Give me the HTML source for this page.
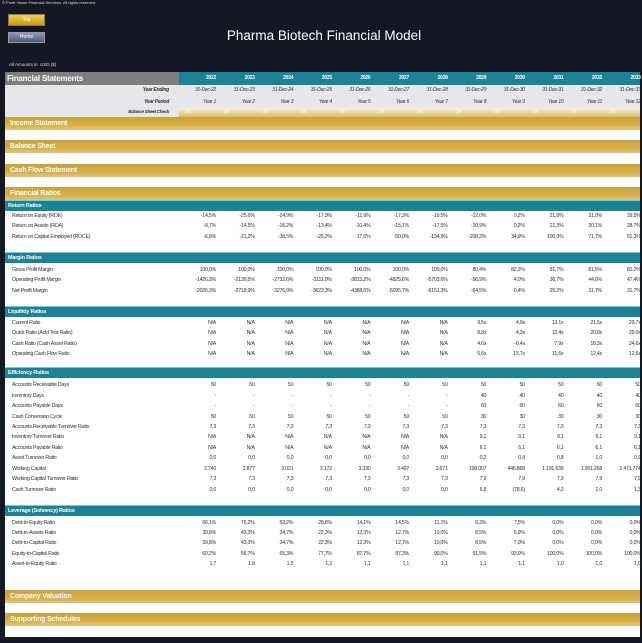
<!DOCTYPE html>
<html><head><meta charset="utf-8">
<style>
*{margin:0;padding:0;box-sizing:border-box}
body{width:642px;height:643px;background:#141822;position:relative;overflow:hidden;font-family:"Liberation Sans",sans-serif;font-size:5.3px;color:#333}
.a{position:absolute}
.sheet{position:absolute;left:5px;top:72px;width:635px;height:565px;background:#fff}
.gold{position:absolute;left:5px;width:635px;height:13px;background:linear-gradient(#c9a23a,#d8ae45 60%,#e3c47a);color:#fff;font-weight:bold;font-size:7px;line-height:13px;padding-left:5px;letter-spacing:-0.2px}
.teal{position:absolute;left:5px;width:635px;height:11px;background:#1d8296;color:#fff;font-weight:bold;font-size:5.5px;line-height:11px;padding-left:3px;border-top:1px solid #7cc;letter-spacing:-0.2px}
.r{position:absolute;left:0;width:642px;height:10px;line-height:10px;letter-spacing:-0.25px}
.r .l{position:absolute;left:12px}
.v{position:absolute;left:179px;top:0;display:flex}
.v span{width:38.6px;text-align:right;padding-right:1.5px;display:block;white-space:nowrap}
</style></head><body>
<div class="a" style="left:2px;top:0;color:#ddd;font-size:4px">© Profit Vision Financial Services. All rights reserved.</div>
<div class="a" style="left:8px;top:14px;width:37px;height:12px;background:linear-gradient(#f0d050,#c89a10);border:1px solid #876;color:#fff;font-size:5px;text-align:center;line-height:10px">Top</div>
<div class="a" style="left:8px;top:32px;width:37px;height:11px;background:linear-gradient(#8a9ab8,#4a5a78);border:1px solid #999;color:#fff;font-size:5px;text-align:center;line-height:9px">Home</div>
<div class="a" style="left:0;width:642px;top:28px;text-align:center;color:#fff;font-size:13.5px;padding-left:6px">Pharma Biotech Financial Model</div>
<div class="a" style="left:9px;top:62px;color:#ddd;font-size:4.5px">All Amounts in &nbsp;USD ($)</div>
<div class="sheet"></div>
<div class="a" style="left:5px;top:72px;width:174px;height:13px;background:#7e7e7e;color:#fff;font-weight:bold;font-size:8px;line-height:13px;padding-left:2px;letter-spacing:-0.2px">Financial Statements</div>
<div class="a" style="left:179px;top:72px;width:461px;height:13px;background:#1d8296"></div>
<div class="r" style="top:73px;color:#fff;font-weight:bold;font-size:5px"><div class="v"><span>2022</span><span>2023</span><span>2024</span><span>2025</span><span>2026</span><span>2027</span><span>2028</span><span>2029</span><span>2030</span><span>2031</span><span>2032</span><span>2033</span></div></div>
<div class="a" style="left:5px;top:85px;width:635px;height:32px;background:#e6e7ea"></div>
<div class="a" style="left:179px;top:108px;width:461px;height:9px;background:linear-gradient(#f6f0dc,#dcbb6a)"></div>
<div class="r" style="top:85px;font-style:italic;font-size:5px"><div class="a" style="right:473px;font-weight:bold">Year Ending</div><div class="v"><span>31-Dec-22</span><span>31-Dec-23</span><span>31-Dec-24</span><span>31-Dec-25</span><span>31-Dec-26</span><span>31-Dec-27</span><span>31-Dec-28</span><span>31-Dec-29</span><span>31-Dec-30</span><span>31-Dec-31</span><span>31-Dec-32</span><span>31-Dec-33</span></div></div>
<div class="r" style="top:97px;font-style:italic;font-size:5px"><div class="a" style="right:473px;font-weight:bold">Year Period</div><div class="v"><span>Year 1</span><span>Year 2</span><span>Year 3</span><span>Year 4</span><span>Year 5</span><span>Year 6</span><span>Year 7</span><span>Year 8</span><span>Year 9</span><span>Year 10</span><span>Year 11</span><span>Year 12</span></div></div>
<div class="r" style="top:107px;font-style:italic;font-size:4.5px"><div class="a" style="right:473px;font-weight:bold">Balance Sheet Check</div><div class="v" style="color:#fff"><span style="text-align:left;padding-left:6px">OK</span><span style="text-align:left;padding-left:6px">OK</span><span style="text-align:left;padding-left:6px">OK</span><span style="text-align:left;padding-left:6px">OK</span><span style="text-align:left;padding-left:6px">OK</span><span style="text-align:left;padding-left:6px">OK</span><span style="text-align:left;padding-left:6px">OK</span><span style="text-align:left;padding-left:6px">OK</span><span style="text-align:left;padding-left:6px">OK</span><span style="text-align:left;padding-left:6px">OK</span><span style="text-align:left;padding-left:6px">OK</span><span style="text-align:left;padding-left:6px">OK</span></div></div>

<div class="gold" style="top:117px">Income Statement</div>
<div class="gold" style="top:140px">Balance Sheet</div>
<div class="gold" style="top:164px">Cash Flow Statement</div>
<div class="gold" style="top:187px">Financial Ratios</div>

<div class="teal" style="top:200px">Return Ratios</div>
<div class="r" style="top:211px"><div class="l">Return on Equity (ROE)</div><div class="v"><span>-14,5%</span><span>-25,6%</span><span>-24,9%</span><span>-17,3%</span><span>-11,9%</span><span>-17,3%</span><span>-19,5%</span><span>-12,0%</span><span>0,2%</span><span>21,8%</span><span>31,0%</span><span>29,5%</span></div></div>
<div class="r" style="top:221px"><div class="l">Return on Assets (ROA)</div><div class="v"><span>-8,7%</span><span>-14,5%</span><span>-16,2%</span><span>-13,4%</span><span>-10,4%</span><span>-15,1%</span><span>-17,5%</span><span>-10,9%</span><span>0,2%</span><span>21,3%</span><span>30,1%</span><span>28,7%</span></div></div>
<div class="r" style="top:232px"><div class="l">Return on Capital Employed (ROCE)</div><div class="v"><span>-6,8%</span><span>-21,2%</span><span>-38,5%</span><span>-26,2%</span><span>-17,6%</span><span>-50,0%</span><span>-134,9%</span><span>-208,2%</span><span>34,9%</span><span>100,9%</span><span>71,7%</span><span>51,3%</span></div></div>

<div class="teal" style="top:252px">Margin Ratios</div>
<div class="r" style="top:265px"><div class="l">Gross Profit Margin</div><div class="v"><span>100,0%</span><span>100,0%</span><span>100,0%</span><span>100,0%</span><span>100,0%</span><span>100,0%</span><span>100,0%</span><span>80,4%</span><span>82,3%</span><span>81,7%</span><span>81,5%</span><span>81,2%</span></div></div>
<div class="r" style="top:275px"><div class="l">Operating Profit Margin</div><div class="v"><span>-1426,3%</span><span>-2139,5%</span><span>-2732,6%</span><span>-3111,0%</span><span>-3815,2%</span><span>-4825,6%</span><span>-5703,6%</span><span>-56,9%</span><span>4,0%</span><span>36,7%</span><span>44,6%</span><span>47,4%</span></div></div>
<div class="r" style="top:286px"><div class="l">Net Profit Margin</div><div class="v"><span>-2026,3%</span><span>-2718,9%</span><span>-3276,9%</span><span>-3623,3%</span><span>-4388,6%</span><span>-5095,7%</span><span>-6151,3%</span><span>-64,5%</span><span>0,4%</span><span>25,2%</span><span>31,7%</span><span>31,7%</span></div></div>

<div class="teal" style="top:306px">Liquitidy Ratios</div>
<div class="r" style="top:318px"><div class="l">Current Ratio</div><div class="v"><span>N/A</span><span>N/A</span><span>N/A</span><span>N/A</span><span>N/A</span><span>N/A</span><span>N/A</span><span>9,5x</span><span>4,9x</span><span>13,1x</span><span>21,5x</span><span>29,7x</span></div></div>
<div class="r" style="top:328px"><div class="l">Quick Ratio (Acid Test Ratio)</div><div class="v"><span>N/A</span><span>N/A</span><span>N/A</span><span>N/A</span><span>N/A</span><span>N/A</span><span>N/A</span><span>8,8x</span><span>4,3x</span><span>12,4x</span><span>20,8x</span><span>29,0x</span></div></div>
<div class="r" style="top:339px"><div class="l">Cash Ratio (Cash Asset Ratio)</div><div class="v"><span>N/A</span><span>N/A</span><span>N/A</span><span>N/A</span><span>N/A</span><span>N/A</span><span>N/A</span><span>4,6x</span><span>-0,4x</span><span>7,9x</span><span>16,3x</span><span>24,6x</span></div></div>
<div class="r" style="top:349px"><div class="l">Operating Cash Flow Ratio</div><div class="v"><span>N/A</span><span>N/A</span><span>N/A</span><span>N/A</span><span>N/A</span><span>N/A</span><span>N/A</span><span>5,6x</span><span>13,7x</span><span>11,6x</span><span>12,4x</span><span>12,6x</span></div></div>

<div class="teal" style="top:367px">Efficiency Ratios</div>
<div class="r" style="top:380px"><div class="l">Accounts Receivable Days</div><div class="v"><span>50</span><span>50</span><span>50</span><span>50</span><span>50</span><span>50</span><span>50</span><span>50</span><span>50</span><span>50</span><span>50</span><span>50</span></div></div>
<div class="r" style="top:391px"><div class="l">Inventory Days</div><div class="v"><span>-</span><span>-</span><span>-</span><span>-</span><span>-</span><span>-</span><span>-</span><span>40</span><span>40</span><span>40</span><span>40</span><span>40</span></div></div>
<div class="r" style="top:401px"><div class="l">Accounts Payable Days</div><div class="v"><span>-</span><span>-</span><span>-</span><span>-</span><span>-</span><span>-</span><span>-</span><span>60</span><span>60</span><span>60</span><span>60</span><span>60</span></div></div>
<div class="r" style="top:412px"><div class="l">Cash Conversion Cycle</div><div class="v"><span>50</span><span>50</span><span>50</span><span>50</span><span>50</span><span>50</span><span>50</span><span>30</span><span>30</span><span>30</span><span>30</span><span>30</span></div></div>
<div class="r" style="top:422px"><div class="l">Accounts Receivable Turnover Ratio</div><div class="v"><span>7,3</span><span>7,3</span><span>7,3</span><span>7,3</span><span>7,3</span><span>7,3</span><span>7,3</span><span>7,3</span><span>7,3</span><span>7,3</span><span>7,3</span><span>7,3</span></div></div>
<div class="r" style="top:432px"><div class="l">Inventory Turnover Ratio</div><div class="v"><span>N/A</span><span>N/A</span><span>N/A</span><span>N/A</span><span>N/A</span><span>N/A</span><span>N/A</span><span>9,1</span><span>9,1</span><span>9,1</span><span>9,1</span><span>9,1</span></div></div>
<div class="r" style="top:443px"><div class="l">Accounts Payable Ratio</div><div class="v"><span>N/A</span><span>N/A</span><span>N/A</span><span>N/A</span><span>N/A</span><span>N/A</span><span>N/A</span><span>6,1</span><span>6,1</span><span>6,1</span><span>6,1</span><span>6,1</span></div></div>
<div class="r" style="top:453px"><div class="l">Asset Turnover Ratio</div><div class="v"><span>0,0</span><span>0,0</span><span>0,0</span><span>0,0</span><span>0,0</span><span>0,0</span><span>0,0</span><span>0,2</span><span>0,4</span><span>0,8</span><span>1,0</span><span>0,9</span></div></div>
<div class="r" style="top:464px"><div class="l">Working Capital</div><div class="v"><span>2.740</span><span>2.877</span><span>3.021</span><span>3.172</span><span>3.330</span><span>3.497</span><span>3.671</span><span>198.007</span><span>446.868</span><span>1.191.639</span><span>1.951.268</span><span>2.471.774</span></div></div>
<div class="r" style="top:474px"><div class="l">Working Capital Turnover Ratio</div><div class="v"><span>7,3</span><span>7,3</span><span>7,3</span><span>7,3</span><span>7,3</span><span>7,3</span><span>7,3</span><span>7,9</span><span>7,9</span><span>7,9</span><span>7,9</span><span>7,9</span></div></div>
<div class="r" style="top:485px"><div class="l">Cash Turnover Ratio</div><div class="v"><span>0,0</span><span>0,0</span><span>0,0</span><span>0,0</span><span>0,0</span><span>0,0</span><span>0,0</span><span>6,8</span><span>(78,6)</span><span>4,2</span><span>2,0</span><span>1,3</span></div></div>

<div class="teal" style="top:505px">Leverage (Solvency) Ratios</div>
<div class="r" style="top:518px"><div class="l">Debt-to-Equity Ratio</div><div class="v"><span>66,1%</span><span>76,2%</span><span>53,2%</span><span>28,6%</span><span>14,1%</span><span>14,5%</span><span>11,1%</span><span>9,3%</span><span>7,5%</span><span>0,0%</span><span>0,0%</span><span>0,0%</span></div></div>
<div class="r" style="top:528px"><div class="l">Debt-to-Assets Ratio</div><div class="v"><span>39,8%</span><span>43,3%</span><span>34,7%</span><span>22,3%</span><span>12,3%</span><span>12,7%</span><span>10,0%</span><span>8,5%</span><span>6,9%</span><span>0,0%</span><span>0,0%</span><span>0,0%</span></div></div>
<div class="r" style="top:538px"><div class="l">Debt-to-Capital Ratio</div><div class="v"><span>39,8%</span><span>43,3%</span><span>34,7%</span><span>22,3%</span><span>12,3%</span><span>12,7%</span><span>10,0%</span><span>8,5%</span><span>7,0%</span><span>0,0%</span><span>0,0%</span><span>0,0%</span></div></div>
<div class="r" style="top:549px"><div class="l">Equity-to-Capital Ratio</div><div class="v"><span>60,2%</span><span>56,7%</span><span>65,3%</span><span>77,7%</span><span>87,7%</span><span>87,3%</span><span>90,0%</span><span>91,5%</span><span>93,0%</span><span>100,0%</span><span>100,0%</span><span>100,0%</span></div></div>
<div class="r" style="top:559px"><div class="l">Asset-to-Equity Ratio</div><div class="v"><span>1,7</span><span>1,8</span><span>1,5</span><span>1,3</span><span>1,1</span><span>1,1</span><span>1,1</span><span>1,1</span><span>1,1</span><span>1,0</span><span>1,0</span><span>1,0</span></div></div>

<div class="gold" style="top:590px">Company Valuation</div>
<div class="gold" style="top:613px">Supporting Schedules</div>
</body></html>
